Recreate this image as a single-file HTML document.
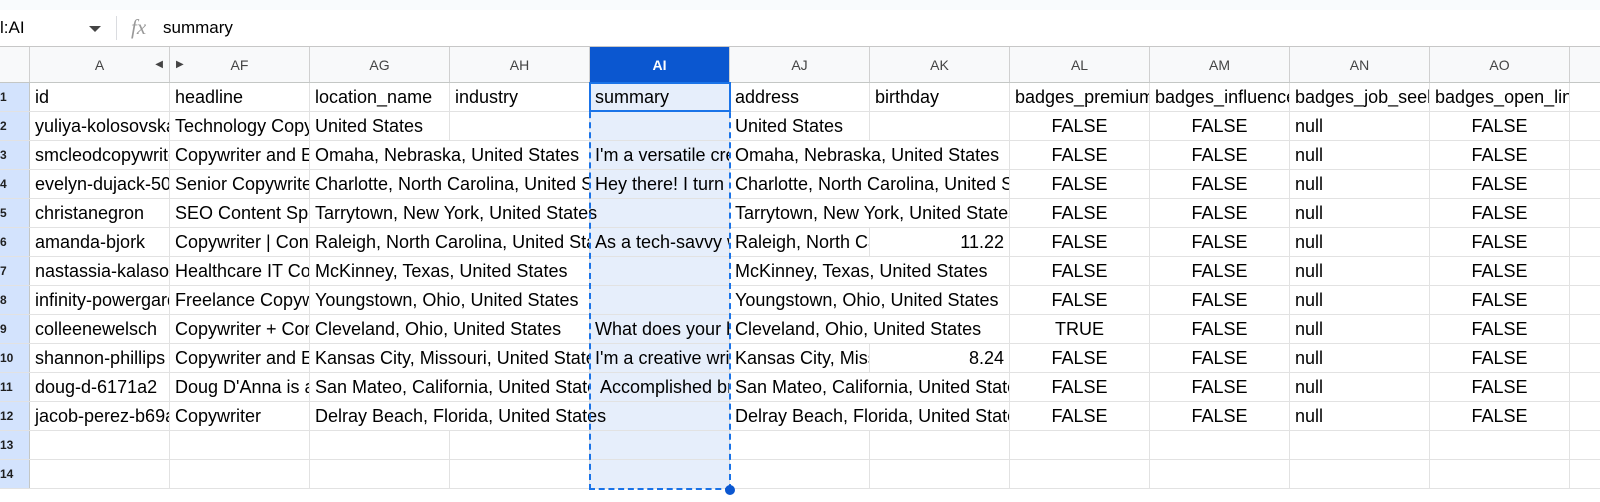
<!DOCTYPE html>
<html><head><style>
body{margin:0;width:1600px;height:502px;overflow:hidden;background:#fff;font-family:"Liberation Sans",Arial,sans-serif;position:relative}
.fb{position:absolute;left:0;top:10px;width:1600px;height:36px;border-bottom:1px solid #c7c7c7;background:#fff}
.top{position:absolute;left:0;top:0;width:1600px;height:10px;background:#f9fbfd}
.hdr{position:absolute;top:47px;left:0;width:1600px;height:35px;background:#f8f9fa;border-bottom:1px solid #c4c7c5}
.h{position:absolute;top:0;height:35px;line-height:36px;text-align:center;font-size:14px;color:#444;border-right:1px solid #d0d0d0;box-sizing:border-box}
.row{position:absolute;left:0;width:1600px;height:29px;border-bottom:1px solid #e2e2e2;box-sizing:border-box}
.c{position:absolute;top:0;height:28px;line-height:29px;font-size:18px;color:#000;white-space:nowrap;overflow:hidden;padding-left:5px;box-sizing:border-box;border-right:1px solid #e2e2e2}
.rn{position:absolute;left:0;top:0;width:30px;height:28px;line-height:28px;background:#d3e3fd;font-size:12px;font-weight:bold;color:#1f1f1f;text-align:right;padding-right:24px;box-sizing:border-box;border-right:1px solid #c4c7c5;overflow:hidden}
.ctr{text-align:center;padding-left:0}
.rt{text-align:right;padding-right:5px}
.c0{left:30px;width:140px}.c1{left:170px;width:140px}.c2{left:310px;width:140px}.c3{left:450px;width:140px}.c4{left:590px;width:140px;background:#e6eefb}.c5{left:730px;width:140px}.c6{left:870px;width:140px}.c7{left:1010px;width:140px}.c8{left:1150px;width:140px}.c9{left:1290px;width:140px}.c10{left:1430px;width:140px}
.w2{width:280px;background:transparent}
</style></head><body>
<div class="top"></div>
<div class="fb">
<div style="position:absolute;left:0;top:8px;font-size:17px">l:AI</div>
<div style="position:absolute;left:89px;top:16px;width:0;height:0;border-left:6px solid transparent;border-right:6px solid transparent;border-top:6px solid #444"></div>
<div style="position:absolute;left:116px;top:6px;width:1px;height:24px;background:#dadce0"></div>
<div style="position:absolute;left:131px;top:5px;font-family:'Liberation Serif',serif;font-style:italic;font-size:21px;color:#999">fx</div>
<div style="position:absolute;left:163px;top:8px;font-size:17px">summary</div>
</div>
<div class="hdr">
<div class="h" style="left:0;width:30px;background:#f8f9fa"></div>
<div class="h" style="left:30px;width:140px">A<span style="position:absolute;right:6px;font-size:10px">&#9664;</span></div>
<div class="h" style="left:170px;width:140px"><span style="position:absolute;left:6px;font-size:10px">&#9654;</span>AF</div>
<div class="h" style="left:310px;width:140px">AG</div>
<div class="h" style="left:450px;width:140px">AH</div>
<div class="h" style="left:590px;width:140px;background:#0b57d0;color:#fff;font-weight:bold">AI</div>
<div class="h" style="left:730px;width:140px">AJ</div>
<div class="h" style="left:870px;width:140px">AK</div>
<div class="h" style="left:1010px;width:140px">AL</div>
<div class="h" style="left:1150px;width:140px">AM</div>
<div class="h" style="left:1290px;width:140px">AN</div>
<div class="h" style="left:1430px;width:140px">AO</div>
</div>

<div class="row" style="top:83px"><div class="rn">1</div><div class="c c0">id</div><div class="c c1">headline</div><div class="c c2">location_name</div><div class="c c3">industry</div><div class="c c4">summary</div><div class="c c5">address</div><div class="c c6">birthday</div><div class="c c7">badges_premium</div><div class="c c8">badges_influencer</div><div class="c c9">badges_job_seeker</div><div class="c c10">badges_open_link</div></div>
<div class="row" style="top:112px"><div class="rn">2</div><div class="c c0">yuliya-kolosovskaya</div><div class="c c1">Technology Copywriter</div><div class="c c2">United States</div><div class="c c3"></div><div class="c c4"></div><div class="c c5">United States</div><div class="c c6"></div><div class="c c7 ctr">FALSE</div><div class="c c8 ctr">FALSE</div><div class="c c9">null</div><div class="c c10 ctr">FALSE</div></div>
<div class="row" style="top:141px"><div class="rn">3</div><div class="c c0">smcleodcopywriter</div><div class="c c1">Copywriter and Editor</div><div class="c c3"></div><div class="c c2 w2">Omaha, Nebraska, United States</div><div class="c c4">I'm a versatile creative</div><div class="c c6"></div><div class="c c5 w2">Omaha, Nebraska, United States</div><div class="c c7 ctr">FALSE</div><div class="c c8 ctr">FALSE</div><div class="c c9">null</div><div class="c c10 ctr">FALSE</div></div>
<div class="row" style="top:170px"><div class="rn">4</div><div class="c c0">evelyn-dujack-50</div><div class="c c1">Senior Copywriter</div><div class="c c3"></div><div class="c c2 w2">Charlotte, North Carolina, United States</div><div class="c c4">Hey there! I turn ideas</div><div class="c c6"></div><div class="c c5 w2">Charlotte, North Carolina, United States</div><div class="c c7 ctr">FALSE</div><div class="c c8 ctr">FALSE</div><div class="c c9">null</div><div class="c c10 ctr">FALSE</div></div>
<div class="row" style="top:199px"><div class="rn">5</div><div class="c c0">christanegron</div><div class="c c1">SEO Content Specialist</div><div class="c c3"></div><div class="c c4"></div><div class="c c2" style="width:300px;background:transparent;border:0">Tarrytown, New York, United States</div><div class="c c6"></div><div class="c c5 w2">Tarrytown, New York, United States</div><div class="c c7 ctr">FALSE</div><div class="c c8 ctr">FALSE</div><div class="c c9">null</div><div class="c c10 ctr">FALSE</div></div>
<div class="row" style="top:228px"><div class="rn">6</div><div class="c c0">amanda-bjork</div><div class="c c1">Copywriter | Content</div><div class="c c3"></div><div class="c c2 w2">Raleigh, North Carolina, United States</div><div class="c c4">As a tech-savvy writer</div><div class="c c5">Raleigh, North Carolina</div><div class="c c6 rt">11.22</div><div class="c c7 ctr">FALSE</div><div class="c c8 ctr">FALSE</div><div class="c c9">null</div><div class="c c10 ctr">FALSE</div></div>
<div class="row" style="top:257px"><div class="rn">7</div><div class="c c0">nastassia-kalasova</div><div class="c c1">Healthcare IT Copywriter</div><div class="c c3"></div><div class="c c2 w2">McKinney, Texas, United States</div><div class="c c4"></div><div class="c c6"></div><div class="c c5 w2">McKinney, Texas, United States</div><div class="c c7 ctr">FALSE</div><div class="c c8 ctr">FALSE</div><div class="c c9">null</div><div class="c c10 ctr">FALSE</div></div>
<div class="row" style="top:286px"><div class="rn">8</div><div class="c c0">infinity-powergarden</div><div class="c c1">Freelance Copywriter</div><div class="c c3"></div><div class="c c2 w2">Youngstown, Ohio, United States</div><div class="c c4"></div><div class="c c6"></div><div class="c c5 w2">Youngstown, Ohio, United States</div><div class="c c7 ctr">FALSE</div><div class="c c8 ctr">FALSE</div><div class="c c9">null</div><div class="c c10 ctr">FALSE</div></div>
<div class="row" style="top:315px"><div class="rn">9</div><div class="c c0">colleenewelsch</div><div class="c c1">Copywriter + Content</div><div class="c c3"></div><div class="c c2 w2">Cleveland, Ohio, United States</div><div class="c c4">What does your brand</div><div class="c c6"></div><div class="c c5 w2">Cleveland, Ohio, United States</div><div class="c c7 ctr">TRUE</div><div class="c c8 ctr">FALSE</div><div class="c c9">null</div><div class="c c10 ctr">FALSE</div></div>
<div class="row" style="top:344px"><div class="rn">10</div><div class="c c0">shannon-phillips</div><div class="c c1">Copywriter and Editor</div><div class="c c3"></div><div class="c c2 w2">Kansas City, Missouri, United States</div><div class="c c4">I'm a creative writer</div><div class="c c5">Kansas City, Missouri</div><div class="c c6 rt">8.24</div><div class="c c7 ctr">FALSE</div><div class="c c8 ctr">FALSE</div><div class="c c9">null</div><div class="c c10 ctr">FALSE</div></div>
<div class="row" style="top:373px"><div class="rn">11</div><div class="c c0">doug-d-6171a2</div><div class="c c1">Doug D'Anna is a writer</div><div class="c c3"></div><div class="c c2 w2">San Mateo, California, United States</div><div class="c c4">&nbsp;Accomplished brand</div><div class="c c6"></div><div class="c c5 w2">San Mateo, California, United States</div><div class="c c7 ctr">FALSE</div><div class="c c8 ctr">FALSE</div><div class="c c9">null</div><div class="c c10 ctr">FALSE</div></div>
<div class="row" style="top:402px"><div class="rn">12</div><div class="c c0">jacob-perez-b69a</div><div class="c c1">Copywriter</div><div class="c c3"></div><div class="c c4"></div><div class="c c2" style="width:320px;background:transparent;border:0">Delray Beach, Florida, United States</div><div class="c c6"></div><div class="c c5 w2">Delray Beach, Florida, United States</div><div class="c c7 ctr">FALSE</div><div class="c c8 ctr">FALSE</div><div class="c c9">null</div><div class="c c10 ctr">FALSE</div></div>
<div class="row" style="top:431px"><div class="rn">13</div><div class="c c0"></div><div class="c c1"></div><div class="c c2"></div><div class="c c3"></div><div class="c c4"></div><div class="c c5"></div><div class="c c6"></div><div class="c c7"></div><div class="c c8"></div><div class="c c9"></div><div class="c c10"></div></div>
<div class="row" style="top:460px"><div class="rn">14</div><div class="c c0"></div><div class="c c1"></div><div class="c c2"></div><div class="c c3"></div><div class="c c4"></div><div class="c c5"></div><div class="c c6"></div><div class="c c7"></div><div class="c c8"></div><div class="c c9"></div><div class="c c10"></div></div>

<div style="position:absolute;left:589px;top:82px;width:142px;height:408px;border:2px dashed #1a73e8;box-sizing:border-box"></div>
<div style="position:absolute;left:589px;top:82px;width:142px;height:30px;border:2px solid #1a73e8;box-sizing:border-box"></div>
<div style="position:absolute;left:725px;top:485px;width:10px;height:10px;border-radius:50%;background:#0b57d0"></div>
</body></html>
